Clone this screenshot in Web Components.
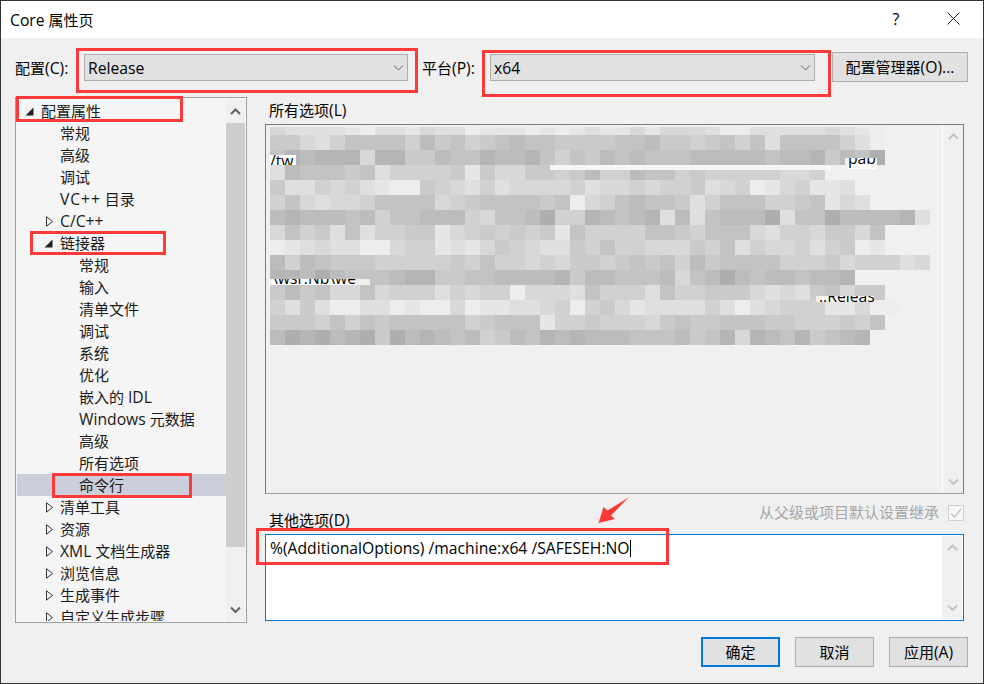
<!DOCTYPE html>
<html lang="zh">
<head>
<meta charset="utf-8">
<title>Core 属性页</title>
<style>
  html, body { margin: 0; padding: 0; overflow: hidden; background: #f0f0f0; }
  /* latin runs sit a bit larger than the CJK text next to them */
  .l { font-size: 15.7px; }
  .w { font-size: 15.7px; letter-spacing: .9px; }
</style>
</head>
<body>
<prop-dialog>
  <title-bar slot="title"><span class="l">Core</span> 属性页</title-bar>

  <field-label slot="config-label" style="width:69px">配置<span class="l">(C):</span></field-label>
  <combo-box slot="config" style="width:324px"><span class="l">Release</span></combo-box>
  <field-label slot="platform-label" style="width:68px;margin-left:14px">平台<span class="l">(P):</span></field-label>
  <combo-box slot="platform" style="width:325px"><span class="l">x64</span></combo-box>
  <push-button slot="manager" style="width:136px;height:30px;margin-left:17px">配置管理器<span class="l">(O)...</span></push-button>

  <tree-view slot="tree">
    <tree-item level="0" state="open">配置属性</tree-item>
    <tree-item level="1">常规</tree-item>
    <tree-item level="1">高级</tree-item>
    <tree-item level="1">调试</tree-item>
    <tree-item level="1"><span class="w">VC++</span> 目录</tree-item>
    <tree-item level="1" state="closed"><span class="l">C/C++</span></tree-item>
    <tree-item level="1" state="open">链接器</tree-item>
    <tree-item level="2">常规</tree-item>
    <tree-item level="2">输入</tree-item>
    <tree-item level="2">清单文件</tree-item>
    <tree-item level="2">调试</tree-item>
    <tree-item level="2">系统</tree-item>
    <tree-item level="2">优化</tree-item>
    <tree-item level="2">嵌入的 <span class="l">IDL</span></tree-item>
    <tree-item level="2"><span class="l">Windows</span> 元数据</tree-item>
    <tree-item level="2">高级</tree-item>
    <tree-item level="2">所有选项</tree-item>
    <tree-item level="2" selected>命令行</tree-item>
    <tree-item level="1" state="closed">清单工具</tree-item>
    <tree-item level="1" state="closed">资源</tree-item>
    <tree-item level="1" state="closed"><span class="l">XML</span> 文档生成器</tree-item>
    <tree-item level="1" state="closed">浏览信息</tree-item>
    <tree-item level="1" state="closed">生成事件</tree-item>
    <tree-item level="1" state="closed">自定义生成步骤</tree-item>
  </tree-view>

  <span slot="all-label">所有选项<span class="l">(L)</span></span>
  <blurred-options slot="all"></blurred-options>
  <span slot="other-label">其他选项<span class="l">(D)</span></span>
  <inherit-check slot="inherit">从父级或项目默认设置继承</inherit-check>
  <options-box slot="other"><span class="l">%(AdditionalOptions) /machine:x64 /SAFESEH:NO</span></options-box>

  <push-button slot="footer" default style="width:79px;height:30px">确定</push-button>
  <push-button slot="footer" style="width:79px;height:30px;margin-left:15px">取消</push-button>
  <push-button slot="footer" style="width:79px;height:30px;margin-left:15px">应用<span class="l">(A)</span></push-button>
</prop-dialog>

<red-box x="76" y="48" w="342" h="45"></red-box>
<red-box x="482" y="50" w="349" h="47"></red-box>
<red-box x="16" y="96" w="167" h="26"></red-box>
<red-box x="30" y="231" w="136" h="24"></red-box>
<red-box x="52" y="473" w="140" h="25"></red-box>
<red-box x="256" y="528" w="413" h="37"></red-box>
<red-arrow></red-arrow>

<script>
const CHEVRON_UP = 'M1 6 L5.5 1.5 L10 6';
const CHEVRON_DOWN = 'M1 1.5 L5.5 6 L10 1.5';

class PropDialog extends HTMLElement {
  constructor() {
    super();
    this.attachShadow({ mode: 'open' }).innerHTML = `
      <style>
        :host {
          display: flex;
          flex-direction: column;
          box-sizing: border-box;
          width: 984px;
          height: 684px;
          border: 1px solid #333;
          background: #f0f0f0;
          color: #000;
          font: 15px/22px "Open Sans", "Noto Sans CJK SC", sans-serif;
        }
        .top { display: flex; align-items: center; height: 30px; margin: 14px 0 0 14px; }
        .main { display: flex; gap: 18px; margin: 15px 0 0 14px; }
        .right { display: flex; flex-direction: column; width: 699px; }
        .cap { height: 27px; padding-left: 4px; line-height: 26px; }
        .between { display: flex; justify-content: space-between; height: 40px; padding-left: 4px; }
        .between ::slotted(span) { align-self: flex-end; line-height: 26px; margin-bottom: 1px; }
        .foot { display: flex; justify-content: flex-end; margin: 14px 15px 0 0; }
      </style>
      <slot name="title"></slot>
      <div class="top">
        <slot name="config-label"></slot><slot name="config"></slot>
        <slot name="platform-label"></slot><slot name="platform"></slot>
        <slot name="manager"></slot>
      </div>
      <div class="main">
        <slot name="tree"></slot>
        <div class="right">
          <div class="cap"><slot name="all-label"></slot></div>
          <slot name="all"></slot>
          <div class="between"><slot name="other-label"></slot><slot name="inherit"></slot></div>
          <slot name="other"></slot>
        </div>
      </div>
      <div class="foot"><slot name="footer"></slot></div>
    `;
  }
}

class TitleBar extends HTMLElement {
  constructor() {
    super();
    this.attachShadow({ mode: 'open' }).innerHTML = `
      <style>
        :host { display: flex; align-items: center; height: 37px; padding-left: 9px; background: #fff; }
        .help { margin-left: auto; width: 16px; text-align: center; margin-right: 43px; font-size: 16px; margin-top: -2px; }
        svg { display: block; margin-right: 23px; margin-top: -2px; }
      </style>
      <span><slot></slot></span>
      <span class="help">?</span>
      <svg width="13" height="13" viewBox="0 0 13 13"><path d="M.5 .5 L12.5 12.5 M12.5 .5 L.5 12.5" stroke="#222" fill="none"/></svg>
    `;
  }
}

class FieldLabel extends HTMLElement {
  constructor() {
    super();
    this.attachShadow({ mode: 'open' }).innerHTML = `
      <style>:host { display: block; box-sizing: border-box; white-space: nowrap; padding-top: 1px; }</style>
      <slot></slot>
    `;
  }
}

class ComboBox extends HTMLElement {
  constructor() {
    super();
    this.attachShadow({ mode: 'open' }).innerHTML = `
      <style>
        :host {
          display: flex; align-items: center; justify-content: space-between; box-sizing: border-box;
          height: 27px; padding: 1px 3px 0 3px;
          background: #e1e1e1; border: 1px solid #adadad;
        }
        svg { display: block; }
      </style>
      <span><slot></slot></span>
      <svg width="11" height="7" viewBox="0 0 11 7"><path d="${CHEVRON_DOWN}" stroke="#606060" fill="none"/></svg>
    `;
  }
}

class PushButton extends HTMLElement {
  constructor() {
    super();
    this.attachShadow({ mode: 'open' }).innerHTML = `
      <style>
        :host {
          display: flex; align-items: center; justify-content: center; box-sizing: border-box;
          background: #e1e1e1; border: 1px solid #adadad; white-space: nowrap;
        }
        :host([default]) { border: 2px solid #0078d7; }
      </style>
      <span><slot></slot></span>
    `;
  }
}

class ScrollBar extends HTMLElement {
  constructor() {
    super();
    const color = this.hasAttribute('disabled') ? '#c4c4c4' : '#606060';
    this.attachShadow({ mode: 'open' }).innerHTML = `
      <style>
        :host { display: flex; flex-direction: column; box-sizing: border-box; width: 19px; background: #f0f0f0; }
        .btn { flex: none; display: flex; align-items: center; justify-content: center; height: 23px; }
        .track { flex: 1; min-height: 0; }
        .thumb { height: var(--thumb, 0); background: #cdcdcd; }
        svg { display: block; }
      </style>
      <div class="btn"><svg width="11" height="7" viewBox="0 0 11 7"><path d="${CHEVRON_UP}" stroke="${color}" stroke-width="2" fill="none"/></svg></div>
      <div class="track"><div class="thumb"></div></div>
      <div class="btn"><svg width="11" height="7" viewBox="0 0 11 7"><path d="${CHEVRON_DOWN}" stroke="${color}" stroke-width="2" fill="none"/></svg></div>
    `;
  }
}

class TreeView extends HTMLElement {
  constructor() {
    super();
    this.attachShadow({ mode: 'open' }).innerHTML = `
      <style>
        :host {
          display: flex; box-sizing: border-box; width: 232px; height: 526px; flex: none;
          border: 1px solid #a0a0a0; background: #f5f5f5; padding: 2px 1px 1px 1px;
        }
        .rows { flex: 1; min-width: 0; overflow: hidden; }
        scroll-bar { --thumb: 424px; }
      </style>
      <div class="rows"><slot></slot></div>
      <scroll-bar></scroll-bar>
    `;
  }
}

class TreeItem extends HTMLElement {
  constructor() {
    super();
    const level = Number(this.getAttribute('level') || 0);
    const state = this.getAttribute('state');
    let icon = '';
    if (state === 'open') {
      icon = '<svg width="9" height="9" viewBox="0 0 9 9"><path d="M8.5 .5 V8.5 H.5 Z" fill="#222"/></svg>';
    } else if (state === 'closed') {
      icon = '<svg width="9" height="11" viewBox="0 0 9 11"><path d="M1.5 .8 L7.5 5.5 L1.5 10.2 Z" fill="none" stroke="#333"/></svg>';
    }
    this.attachShadow({ mode: 'open' }).innerHTML = `
      <style>
        :host { display: block; height: 22px; white-space: nowrap; color: #1a1a1a; }
        :host([selected]) { background: #cccedb; }
        .row { display: flex; align-items: center; height: 22px; padding-left: ${24 + level * 19}px; }
        .ic { flex: none; width: 16px; margin-left: -16px; display: flex; align-items: center; }
        svg { display: block; margin-left: ${state === 'open' ? 0 : 1}px; }
      </style>
      <div class="row"><span class="ic">${icon}</span><span><slot></slot></span></div>
    `;
  }
}

// gray level per cell of the blurred block, one digit per 15px cell
const MOSAIC = [
  '67777897786779888989878868666799777776789',
  '44675333352435432334444332445435373333579',
  '31211161144233122135342323332222232214230',
  '72333437555548466445425523354555556656858',
  '477565789945675766665766565547659865887',
  '5367665333365433334396532334753335543867',
  '21222325332225633205512321727322207330222217',
  '63547375544865454548355553345333675564463',
  '98767799655878645677453556664537566575498',
  '25234445555545355656445434352433335554655576',
  '112023332114433222214223332632023223221',
  '42436636555756559666735557355444676743644',
  '574799779899698877659546877775797655588699',
  '44453534333335433385545556434433344555453',
  '2010210402123254231212223332431612314321'
];
const MOSAIC_COLS = [41, 41, 41, 37, 39, 40, 44, 41, 41, 44, 39, 41, 42, 41, 40];
// places where the cut-off text under the block shows through
const HOLES = [[4, 30, 26, 10], [579, 33, 32, 9], [4, 154, 100, 6], [550, 171, 58, 6]];

class BlurredOptions extends HTMLElement {
  constructor() {
    super();
    let cells = '';
    MOSAIC.forEach((row, r) => {
      const y = r === 0 ? 2 : 10 + (r - 1) * 15;
      const h = r === 0 ? 8 : 15;
      [...row.slice(0, MOSAIC_COLS[r])].forEach((d, c) => {
        const g = 174 + Number(d) * 7;
        cells += `<rect x="${4 + c * 15}" y="${y}" width="15" height="${h}" fill="rgb(${g},${g},${g + (c % 5 === 0 ? 3 : 0)})"/>`;
      });
    });
    const holes = HOLES.map(([x, y, w, h]) => `M${x} ${y}h${w}v${h}h${-w}z`).join('');
    this.attachShadow({ mode: 'open' }).innerHTML = `
      <style>
        :host {
          display: flex; box-sizing: border-box; position: relative; height: 370px;
          border: 1px solid #7a7a7a; border-bottom-color: #a0a0a0; background: #f0f0f0;
        }
        .list { flex: 1; min-width: 0; position: relative; overflow: hidden; }
        svg { position: absolute; left: 0; top: 0; }
        scroll-bar { border-left: 1px solid #fff; width: 21px; }
        .frag { position: absolute; white-space: nowrap; background: #fff; font-size: 15.7px; line-height: 22px; }
      </style>
      <div class="list">
        <span class="frag" style="left:4px;top:25px">/tw.</span>
        <span class="frag" style="left:582px;top:22px">pab</span>
        <span class="frag" style="left:6px;top:142px">\\wsr.Nb\\we</span>
        <span class="frag" style="left:553px;top:160px">..Release</span>
        <svg width="680" height="230">
          <clipPath id="c"><path clip-rule="evenodd" d="M0 0h680v230h-680z${holes}"/></clipPath>
          <g clip-path="url(#c)">${cells}</g>
          <rect x="284" y="40" width="280" height="5" fill="#f6f6f6"/>
        </svg>
      </div>
      <scroll-bar disabled></scroll-bar>
    `;
  }
}

class InheritCheck extends HTMLElement {
  constructor() {
    super();
    this.attachShadow({ mode: 'open' }).innerHTML = `
      <style>
        :host { display: flex; align-items: flex-end; gap: 9px; color: #a6a6a6; padding-bottom: 13px; white-space: nowrap; line-height: 17px; }
        .box { box-sizing: border-box; width: 16px; height: 16px; border: 1px solid #cfcfcf; background: #f7f7f7; display: block; }
        svg { display: block; }
      </style>
      <slot></slot>
      <span class="box"><svg width="14" height="14" viewBox="0 0 14 14"><path d="M2 7.5 L5.5 11 L12 3" stroke="#c4c4c4" stroke-width="1.3" fill="none"/></svg></span>
    `;
  }
}

class OptionsBox extends HTMLElement {
  constructor() {
    super();
    this.attachShadow({ mode: 'open' }).innerHTML = `
      <style>
        :host { display: flex; box-sizing: border-box; height: 87px; border: 1px solid #0078d7; background: #fff; }
        .text { flex: 1; min-width: 0; padding: 2px 0 0 4px; white-space: nowrap; }
        .caret { display: inline-block; width: 1px; height: 17px; background: #000; vertical-align: -3px; }
        .sb { margin: 1px; height: 83px; width: 20px; }
      </style>
      <div class="text"><slot></slot><span class="caret"></span></div>
      <scroll-bar class="sb" disabled></scroll-bar>
    `;
  }
}

class RedBox extends HTMLElement {
  constructor() {
    super();
    const a = (n) => this.getAttribute(n);
    this.attachShadow({ mode: 'open' }).innerHTML = `
      <style>
        :host {
          display: block; position: absolute; box-sizing: border-box; pointer-events: none;
          left: ${a('x')}px; top: ${a('y')}px; width: ${a('w')}px; height: ${a('h')}px;
          border: 3px solid #fc3a3a;
        }
      </style>
    `;
  }
}

class RedArrow extends HTMLElement {
  constructor() {
    super();
    this.attachShadow({ mode: 'open' }).innerHTML = `
      <style>
        :host { display: block; position: absolute; left: 594px; top: 494px; width: 40px; height: 34px; pointer-events: none; }
      </style>
      <svg width="40" height="34" viewBox="0 0 40 34"><path d="M34.5 3.5 L17 21.5 L21 25 L4.5 29 L9.5 13 L13.5 16.5 Z" fill="#fc3a3a"/></svg>
    `;
  }
}

customElements.define('scroll-bar', ScrollBar);
customElements.define('prop-dialog', PropDialog);
customElements.define('title-bar', TitleBar);
customElements.define('field-label', FieldLabel);
customElements.define('combo-box', ComboBox);
customElements.define('push-button', PushButton);
customElements.define('tree-view', TreeView);
customElements.define('tree-item', TreeItem);
customElements.define('blurred-options', BlurredOptions);
customElements.define('inherit-check', InheritCheck);
customElements.define('options-box', OptionsBox);
customElements.define('red-box', RedBox);
customElements.define('red-arrow', RedArrow);
</script>
</body>
</html>
